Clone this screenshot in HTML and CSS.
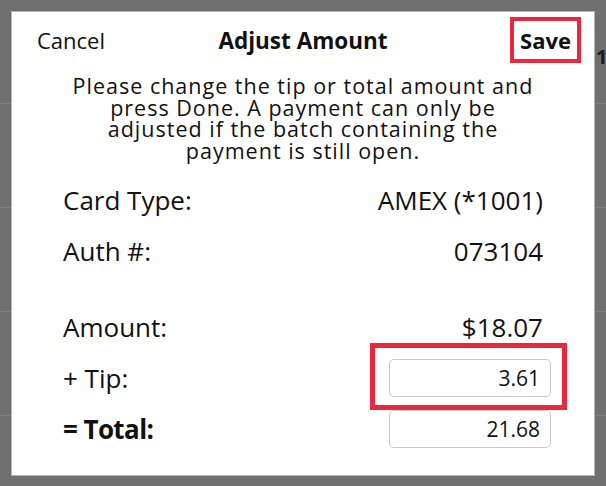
FILE: index.html
```html
<html lang="en">
<head>
  <meta charset="UTF-8">
  <title>Adjust Amount</title>
  <link rel="stylesheet" href="styles.css">
</head>
<body>
  <div class="list">
    <div class="list-row"><span class="list-amount">1.00</span></div>
    <div class="list-row"></div>
    <div class="list-row"></div>
    <div class="list-row"></div>
    <div class="list-row"></div>
  </div>

  <div class="modal">
    <div class="modal-header">
      <div class="cancel">Cancel</div>
      <h2>Adjust Amount</h2>
      <div class="save-wrap"><span class="save">Save</span></div>
    </div>
    <p class="notice">
      Please change the tip or total amount and<br>
      press Done. A payment can only be<br>
      adjusted if the batch containing the<br>
      payment is still open.
    </p>
    <div class="fields">
      <div class="field"><span>Card Type:</span><span>AMEX (*1001)</span></div>
      <div class="field"><span>Auth #:</span><span>073104</span></div>
      <div class="field spaced"><span>Amount:</span><span>$18.07</span></div>
      <div class="field">
        <span>+ Tip:</span>
        <div class="input-wrap highlight"><input type="text" value="3.61"></div>
      </div>
      <div class="field total">
        <span>= Total:</span>
        <div class="input-wrap"><input type="text" value="21.68"></div>
      </div>
    </div>
  </div>
</body>
</html>
```

FILE: styles.css
```css
body {
  margin: 0;
  width: 606px;
  height: 486px;
  overflow: hidden;
  background: #6f6f6f;
  font-family: 'Open Sans', sans-serif;
  color: #111;
}

.list {
  height: 486px;
  overflow: hidden;
}

.list-row {
  height: 104px;
  border-bottom: 1px solid #7e7e7e;
  padding: 45px 0 0 596px;
  box-sizing: border-box;
  white-space: nowrap;
}

.list-amount {
  font-size: 20px;
  line-height: 24px;
  font-weight: 700;
  color: #1c1c1c;
}

.modal {
  position: absolute;
  left: 11px;
  top: 11px;
  width: 584px;
  height: 465px;
  box-sizing: border-box;
  background: white;
  border: 1px solid #b4b4b4;
}

.modal-header {
  display: grid;
  grid-template-columns: 1fr auto 1fr;
  align-items: center;
  padding: 5px 13px 0;
}

.cancel {
  margin-left: 12px;
  font-size: 22px;
}

.modal-header h2 {
  margin: 0;
  font-size: 22.5px;
  font-weight: 700;
}

.save-wrap {
  justify-self: end;
  border: 4px solid #e8283c;
  padding: 0 6px;
  height: 38px;
  line-height: 38px;
}

.save {
  font-size: 22px;
  font-weight: 700;
}

.notice {
  margin: 12px 0 0;
  text-align: center;
  font-size: 21.5px;
  line-height: 21.5px;
  letter-spacing: 1px;
}

.fields {
  margin: 13px 51px 0;
}

.field {
  display: flex;
  justify-content: space-between;
  align-items: center;
  height: 51px;
  font-size: 26px;
}

.field.spaced {
  margin-top: 25px;
}

.field.total > span {
  font-weight: 700;
  letter-spacing: -0.6px;
}

.input-wrap {
  position: relative;
  margin-right: -8px;
}

.input-wrap input {
  display: block;
  width: 162px;
  height: 38px;
  box-sizing: border-box;
  border: 1px solid #cacaca;
  border-radius: 5px;
  padding: 0 10px;
  text-align: right;
  font-family: 'Open Sans', sans-serif;
  font-size: 21px;
  color: #111;
  background: white;
}

.highlight::after {
  content: "";
  position: absolute;
  top: -16px;
  right: -16px;
  bottom: -13px;
  left: -19px;
  border: 5px solid #e8283c;
}
```
